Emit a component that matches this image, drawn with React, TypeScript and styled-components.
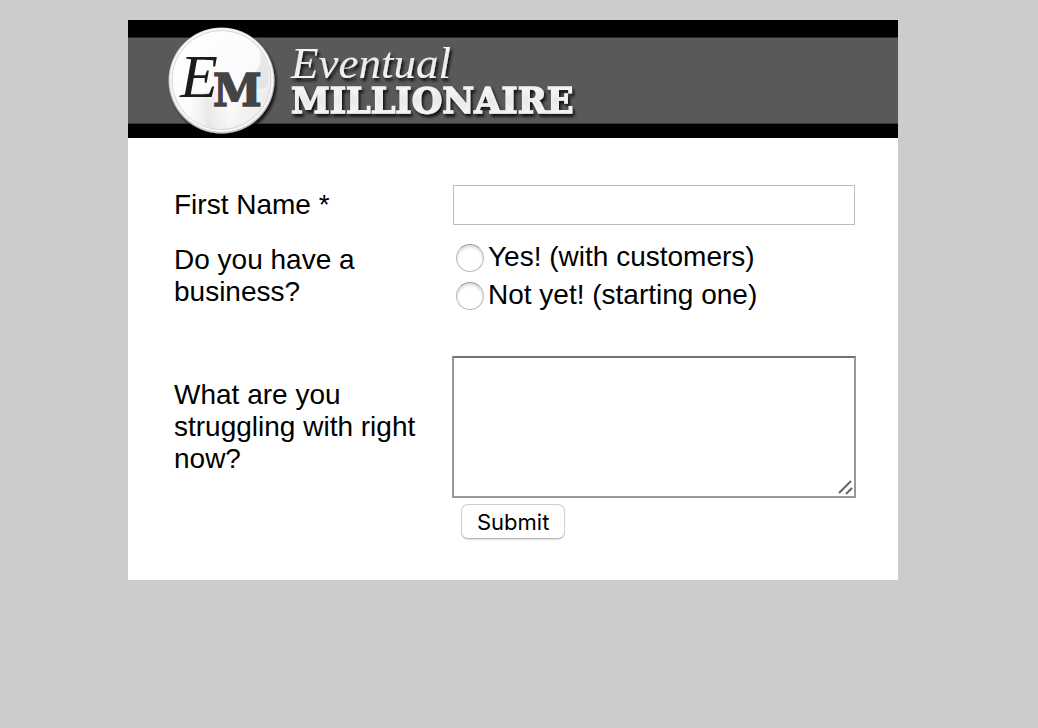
import React from "react";
import styled, { createGlobalStyle } from "styled-components";

const GlobalStyle = createGlobalStyle`
  * { box-sizing: border-box; }
  body {
    margin: 0;
    background: #cccccc;
    color: #000;
    font-family: "Liberation Sans", Arial, sans-serif;
    font-size: 28px;
    line-height: 32px;
  }
`;

const Page = styled.main`
  padding: 20px 140px 20px 128px;
`;

const Card = styled.div`
  background: #fff;
`;

const Banner = styled.header`
  padding-left: 32px;
  background: linear-gradient(#000 0 17px, #2a2a2a 17px 18px, #595959 18px 103px, #3c3c3c 103px 104px, #000 104px);

  svg {
    display: block;
    max-width: 100%;
  }
`;

const Form = styled.form`
  padding: 47px 42px 41px 46px;
`;

const Row = styled.div<{ $space?: number }>`
  display: grid;
  grid-template-columns: 250px minmax(0, 1fr);
  column-gap: 28px;
  align-items: center;
  margin-bottom: ${(p) => p.$space ?? 0}px;
`;

const TextInput = styled.input`
  height: 40px;
  margin: 0 1px;
  padding: 0 8px;
  border: 1px solid #bcbcbc;
  border-radius: 0;
  background: #fff;
  font: inherit;
  outline: none;
`;

const Options = styled.div`
  padding-left: 4px;
`;

const Option = styled.label`
  display: flex;
  align-items: center;
  gap: 4px;
  height: 38px;
`;

const Radio = styled.input`
  appearance: none;
  flex: none;
  width: 28px;
  height: 28px;
  margin: 2px 0 0;
  border: 1px solid #bcbcbc;
  border-top-color: #a0a0a0;
  border-radius: 50%;
  background: #fff;
  box-shadow: inset 0 2px 3px rgba(0, 0, 0, 0.16);

  &:checked {
    background: radial-gradient(#333 0 6px, #fff 7px);
  }
`;

const AreaWrap = styled.div`
  position: relative;
`;

const TextArea = styled.textarea`
  display: block;
  width: 100%;
  height: 142px;
  padding: 4px 8px;
  border: 2px solid #999;
  border-top-color: #737373;
  border-radius: 0;
  background: #fff;
  font: inherit;
  resize: none;
  outline: none;
`;

const Grip = styled.svg`
  position: absolute;
  right: 2px;
  bottom: 2px;
  pointer-events: none;
`;

const Actions = styled.div`
  display: flex;
  padding: 0 9px;
  grid-column: 2;
`;

const Submit = styled.button`
  height: 35px;
  padding: 0 15px;
  border: 1px solid #cfcfcf;
  border-bottom-color: #b8b8b8;
  border-radius: 7px;
  background: #fff;
  box-shadow: 0 1px 1px rgba(0, 0, 0, 0.12);
  color: #000;
  font-family: Inter, sans-serif;
  font-size: 22px;
  line-height: 32px;
`;

function Logo() {
  return (
    <svg width="440" height="118" viewBox="0 0 440 118" role="img" aria-label="Eventual Millionaire">
      <defs>
        <linearGradient id="disc" x1="0" y1="0" x2="1" y2="1">
          <stop offset="0" stopColor="#ffffff" />
          <stop offset="0.6" stopColor="#fbfbfb" />
          <stop offset="0.8" stopColor="#ececec" />
          <stop offset="1" stopColor="#fafafa" />
        </linearGradient>
        <linearGradient id="sheen" x1="0" y1="0" x2="1" y2="0">
          <stop offset="0" stopColor="#fff" stopOpacity="0" />
          <stop offset="0.3" stopColor="#d8d8d8" />
          <stop offset="0.55" stopColor="#fff" />
          <stop offset="1" stopColor="#fff" stopOpacity="0" />
        </linearGradient>
        <linearGradient id="silver" x1="0" y1="0" x2="0" y2="1">
          <stop offset="0" stopColor="#ffffff" />
          <stop offset="0.5" stopColor="#e8e8e8" />
          <stop offset="1" stopColor="#ffffff" />
        </linearGradient>
        <filter id="shadow" x="-10%" y="-20%" width="125%" height="150%">
          <feDropShadow dx="2" dy="3" stdDeviation="1.5" floodColor="#000" floodOpacity="0.8" />
        </filter>
      </defs>
      <g filter="url(#shadow)">
        <circle cx="61.5" cy="60.5" r="53" fill="#c4c4c4" />
      </g>
      <circle cx="61.5" cy="60" r="52" fill="#f6f6f6" />
      <circle cx="61.5" cy="60" r="49.5" fill="url(#disc)" stroke="#d6d6d6" strokeWidth="1" />
      <path d="M22 72 Q60 78 108 48 Q112 76 91 98 Q62 117 36 102 Q26 92 22 72Z" fill="url(#sheen)" opacity="0.5" />
      <path d="M99 28 Q112 46 108 66 Q98 74 84 60 Q106 50 99 28Z" fill="#dcdcdc" opacity="0.6" />
      <text x="20" y="77" fontFamily="Liberation Serif, serif" fontStyle="italic" fontSize="62" fill="#1c1c1c">
        E
      </text>
      <text
        x="53"
        y="86"
        fontFamily="DejaVu Serif, serif"
        fontWeight="bold"
        fontSize="44"
        fill="#444"
        stroke="#444"
        strokeWidth="1.5"
      >
        M
      </text>
      <g filter="url(#shadow)" fill="url(#silver)">
        <text x="131" y="58" fontFamily="Liberation Serif, serif" fontStyle="italic" fontSize="45">
          Eventual
        </text>
        <text
          x="131"
          y="93"
          fontFamily="DejaVu Serif, serif"
          fontWeight="bold"
          fontSize="35"
          stroke="#f2f2f2"
          strokeWidth="1.4"
        >
          MILLIONAIRE
        </text>
      </g>
    </svg>
  );
}

export default function App() {
  return (
    <>
      <GlobalStyle />
      <Page>
        <Card>
          <Banner>
            <Logo />
          </Banner>
          <Form onSubmit={(e: React.FormEvent) => e.preventDefault()}>
            <Row $space={13}>
              <label htmlFor="first-name">First Name *</label>
              <TextInput id="first-name" type="text" />
            </Row>
            <Row $space={42} role="radiogroup" aria-labelledby="business-label">
              <span id="business-label">Do you have a business?</span>
              <Options>
                <Option>
                  <Radio type="radio" name="business" value="yes" />
                  Yes! (with customers)
                </Option>
                <Option>
                  <Radio type="radio" name="business" value="not-yet" />
                  Not yet! (starting one)
                </Option>
              </Options>
            </Row>
            <Row $space={6}>
              <label htmlFor="struggle">What are you struggling with right now?</label>
              <AreaWrap>
                <TextArea id="struggle" />
                <Grip width="16" height="16" viewBox="0 0 16 16" stroke="#666" strokeWidth="2" aria-hidden="true">
                  <path d="M1 13 L13 1 M8 14 L14 8" />
                </Grip>
              </AreaWrap>
            </Row>
            <Row>
              <Actions>
                <Submit type="submit">Submit</Submit>
              </Actions>
            </Row>
          </Form>
        </Card>
      </Page>
    </>
  );
}
